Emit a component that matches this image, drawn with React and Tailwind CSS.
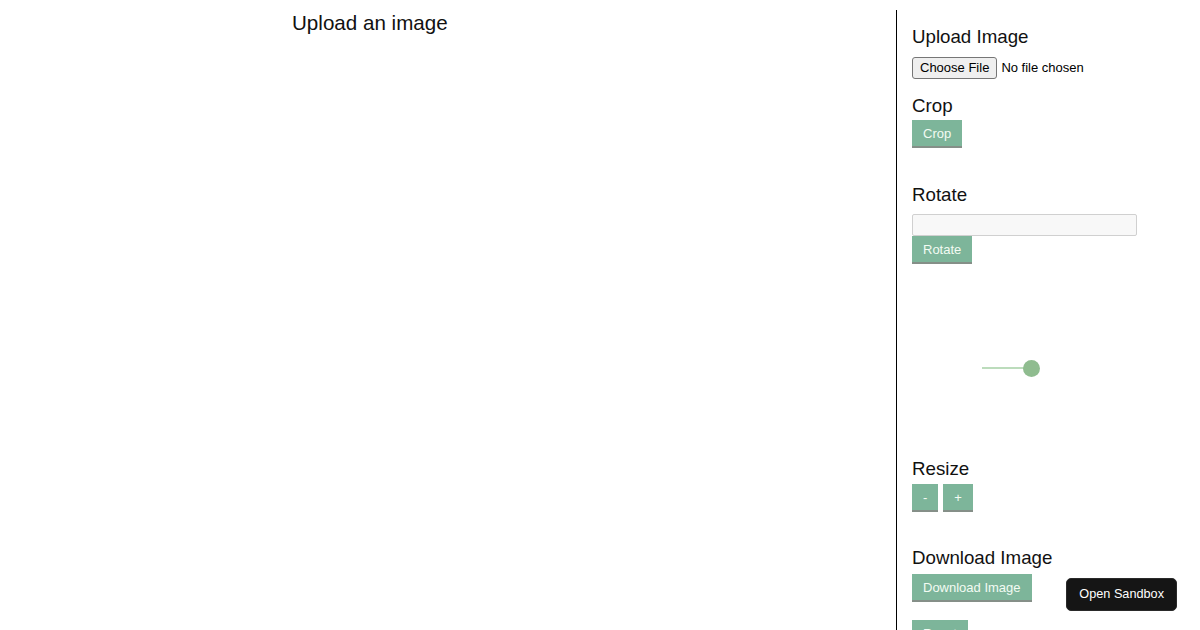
import React from 'react';

const btn =
  'h-[28px] px-[11px] pt-[2px] bg-[#7db59a] text-[#f3fbf3] text-[13px] border-b-2 border-[#858f88] leading-[24px]';

const Heading = ({ children, className = '' }) => (
  <h3 className={`text-[18.72px] leading-[24px] text-[#111] ${className}`}>{children}</h3>
);

export default function App() {
  return (
    <div className="flex min-h-screen bg-white font-['Liberation_Sans',Arial,sans-serif] text-black">
      {/* Canvas area */}
      <div className="w-[896px] shrink-0">
        <h2 className="pl-[292px] pt-[11px] text-[20.6px] leading-[24px] text-[#111]">Upload an image</h2>
      </div>

      {/* Tools */}
      <aside className="w-[304px] mt-[10px] border-l border-black pl-[15px] pb-6">
        <Heading className="mt-[15px]">Upload Image</Heading>
        <div className="mt-[8px] flex items-center h-[22px] text-[13px]">
          <span className="h-[22px] px-[7px] flex items-center bg-[#efefef] border border-[#767676] rounded-[3px] text-black">
            Choose File
          </span>
          <span className="ml-[4px]">No file chosen</span>
        </div>

        <Heading className="mt-[15px]">Crop</Heading>
        <button className={`${btn} mt-[2px] block`}>Crop</button>

        <Heading className="mt-[35px]">Rotate</Heading>
        <input
          type="text"
          className="mt-[7px] block w-[225px] h-[22px] bg-[#f8f8f8] border border-[#d0d0d0] rounded-[2px]"
        />
        <button className={`${btn} block`}>Rotate</button>

        <div className="mt-[96px] h-[16px] flex items-center pl-[70px]">
          <div className="w-[44px] h-[2px] bg-[#bcdcbc]" />
          <div className="w-[17px] h-[17px] -ml-[3px] rounded-full bg-[#8fbc8f]" />
        </div>

        <Heading className="mt-[81px]">Resize</Heading>
        <div className="mt-[3px] flex gap-[5px]">
          <button className={btn}>-</button>
          <button className={btn}>+</button>
        </div>

        <Heading className="mt-[34px]">Download Image</Heading>
        <button className={`${btn} mt-[4px] block`}>Download Image</button>
        <button className={`${btn} mt-[18px] block`}>Reset</button>
      </aside>

      <div className="fixed right-[23px] bottom-[19px] h-[33px] px-[12px] flex items-center rounded-[5px] bg-[#151515] border border-[#2a2a2a] text-white text-[12.7px]">
        Open Sandbox
      </div>
    </div>
  );
}
